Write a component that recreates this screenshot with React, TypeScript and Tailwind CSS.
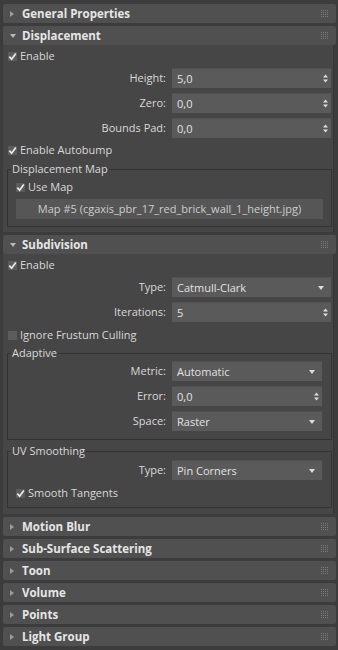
import React from "react";

function Grip() {
  return (
    <div className="ml-auto mr-[8px] grid grid-cols-4 gap-[1px]">
      {Array.from({ length: 16 }).map((_, i) => (
        <span key={i} className="w-[1px] h-[1px] bg-[#7c7c7c]" />
      ))}
    </div>
  );
}

function Header({ title, open }: { title: string; open?: boolean }) {
  return (
    <div className="ml-[3px] w-[333px] h-[19px] flex items-center bg-[#505050] rounded-[2px]">
      <div className="w-[19px] pl-[7px] flex items-center">
        {open ? (
          <span className="w-0 h-0 border-x-[3px] border-x-transparent border-t-[4px] border-t-[#b8b8b8]" />
        ) : (
          <span className="w-0 h-0 border-y-[3px] border-y-transparent border-l-[4px] border-l-[#9c9c9c]" />
        )}
      </div>
      <span className="font-bold text-[11.5px] text-[#e6e6e6] leading-none">{title}</span>
      <Grip />
    </div>
  );
}

function Check({ label, checked, inner }: { label: string; checked?: boolean; inner?: boolean }) {
  return (
    <div className={inner ? "flex items-center h-[18px] pl-[8px]" : "flex items-center h-[18px] pl-[5px]"}>
      <span className="w-[9px] h-[9px] bg-[#5c5c5c] flex items-center justify-center">
        {checked && (
          <svg width="9" height="9" viewBox="0 0 9 9">
            <path d="M1.3 4.6 L3.6 7.2 L7.8 1.4" fill="none" stroke="#ececec" strokeWidth="1.7" />
          </svg>
        )}
      </span>
      <span className="ml-[3px]">{label}</span>
    </div>
  );
}

function Row({ label, inner, children }: { label: string; inner?: boolean; children: React.ReactNode }) {
  return (
    <div className="flex items-center">
      <span className={inner ? "w-[158px] text-right" : "w-[163px] text-right"}>{label}</span>
      <div className="ml-[6px]">{children}</div>
    </div>
  );
}

function Spinner({ value, inner }: { value: string; inner?: boolean }) {
  return (
    <div
      className={
        (inner ? "w-[150px]" : "w-[159px]") +
        " h-[20px] bg-[#5a5a5a] border-t border-[#505050] flex items-center pl-[5px] pr-[3px] text-[#e2e2e2]"
      }
    >
      <span>{value}</span>
      <svg className="ml-auto" width="5" height="9" viewBox="0 0 5 9">
        <path d="M0 3.6 L2.5 0.6 L5 3.6 Z M0 5.4 L2.5 8.4 L5 5.4 Z" fill="#dcdcdc" />
      </svg>
    </div>
  );
}

function Select({ value, inner }: { value: string; inner?: boolean }) {
  return (
    <div
      className={
        (inner ? "w-[150px]" : "w-[159px]") +
        " h-[20px] bg-[#5a5a5a] border-t border-[#505050] flex items-center pl-[5px] pr-[7px] text-[#e2e2e2]"
      }
    >
      <span>{value}</span>
      <svg className="ml-auto" width="6" height="4" viewBox="0 0 6 4">
        <path d="M0 0 L6 0 L3 4 Z" fill="#dcdcdc" />
      </svg>
    </div>
  );
}

function Group({ title, className, children }: { title: string; className: string; children: React.ReactNode }) {
  return (
    <fieldset className={"ml-[4px] w-[325px] border border-[#333333] " + className}>
      <legend className="ml-[3px] px-[1px] leading-[16px]">{title}</legend>
      {children}
    </fieldset>
  );
}

export default function App() {
  return (
    <div className="w-[338px] h-[650px] overflow-hidden bg-[#3c3c3c] pt-[4px] flex flex-col gap-[3px] font-['Open_Sans',sans-serif] text-[11px] text-[#d9d9d9] leading-[16px]">
      <Header title="General Properties" />

      <div>
        <Header title="Displacement" open />
        <div className="ml-[3px] w-[331px] bg-[#464646] border-r border-[#363636] pt-[2px] pb-[5px] flex flex-col">
          <Check label="Enable" checked />
          <div className="mt-[3px] flex flex-col gap-[5px]">
            <Row label="Height:">
              <Spinner value="5,0" />
            </Row>
            <Row label="Zero:">
              <Spinner value="0,0" />
            </Row>
            <Row label="Bounds Pad:">
              <Spinner value="0,0" />
            </Row>
          </div>
          <div className="mt-[3px]">
            <Check label="Enable Autobump" checked />
          </div>
          <Group title="Displacement Map" className="mt-[2px] pb-[7px]">
            <div className="mt-[1px]">
              <Check label="Use Map" checked inner />
            </div>
            <div className="mt-[3px] ml-[8px] w-[307px] h-[20px] bg-[#565656] flex items-center justify-center text-[#cdcdcd]">
              Map #5 (cgaxis_pbr_17_red_brick_wall_1_height.jpg)
            </div>
          </Group>
        </div>
      </div>

      <div>
        <Header title="Subdivision" open />
        <div className="ml-[3px] w-[331px] bg-[#464646] border-r border-[#363636] pt-[2px] pb-[6px] flex flex-col">
          <Check label="Enable" checked />
          <div className="mt-[3px] flex flex-col gap-[5px]">
            <Row label="Type:">
              <Select value="Catmull-Clark" />
            </Row>
            <Row label="Iterations:">
              <Spinner value="5" />
            </Row>
          </div>
          <div className="mt-[4px]">
            <Check label="Ignore Frustum Culling" />
          </div>
          <Group title="Adaptive" className="mt-[1px] pb-[8px]">
            <div className="flex flex-col gap-[5px]">
              <Row label="Metric:" inner>
                <Select value="Automatic" inner />
              </Row>
              <Row label="Error:" inner>
                <Spinner value="0,0" inner />
              </Row>
              <Row label="Space:" inner>
                <Select value="Raster" inner />
              </Row>
            </div>
          </Group>
          <Group title="UV Smoothing" className="mt-[3px] pb-[5px]">
            <div className="mt-[1px]">
              <Row label="Type:" inner>
                <Select value="Pin Corners" inner />
              </Row>
            </div>
            <div className="mt-[4px]">
              <Check label="Smooth Tangents" checked inner />
            </div>
          </Group>
        </div>
      </div>

      <Header title="Motion Blur" />
      <Header title="Sub-Surface Scattering" />
      <Header title="Toon" />
      <Header title="Volume" />
      <Header title="Points" />
      <Header title="Light Group" />
    </div>
  );
}
